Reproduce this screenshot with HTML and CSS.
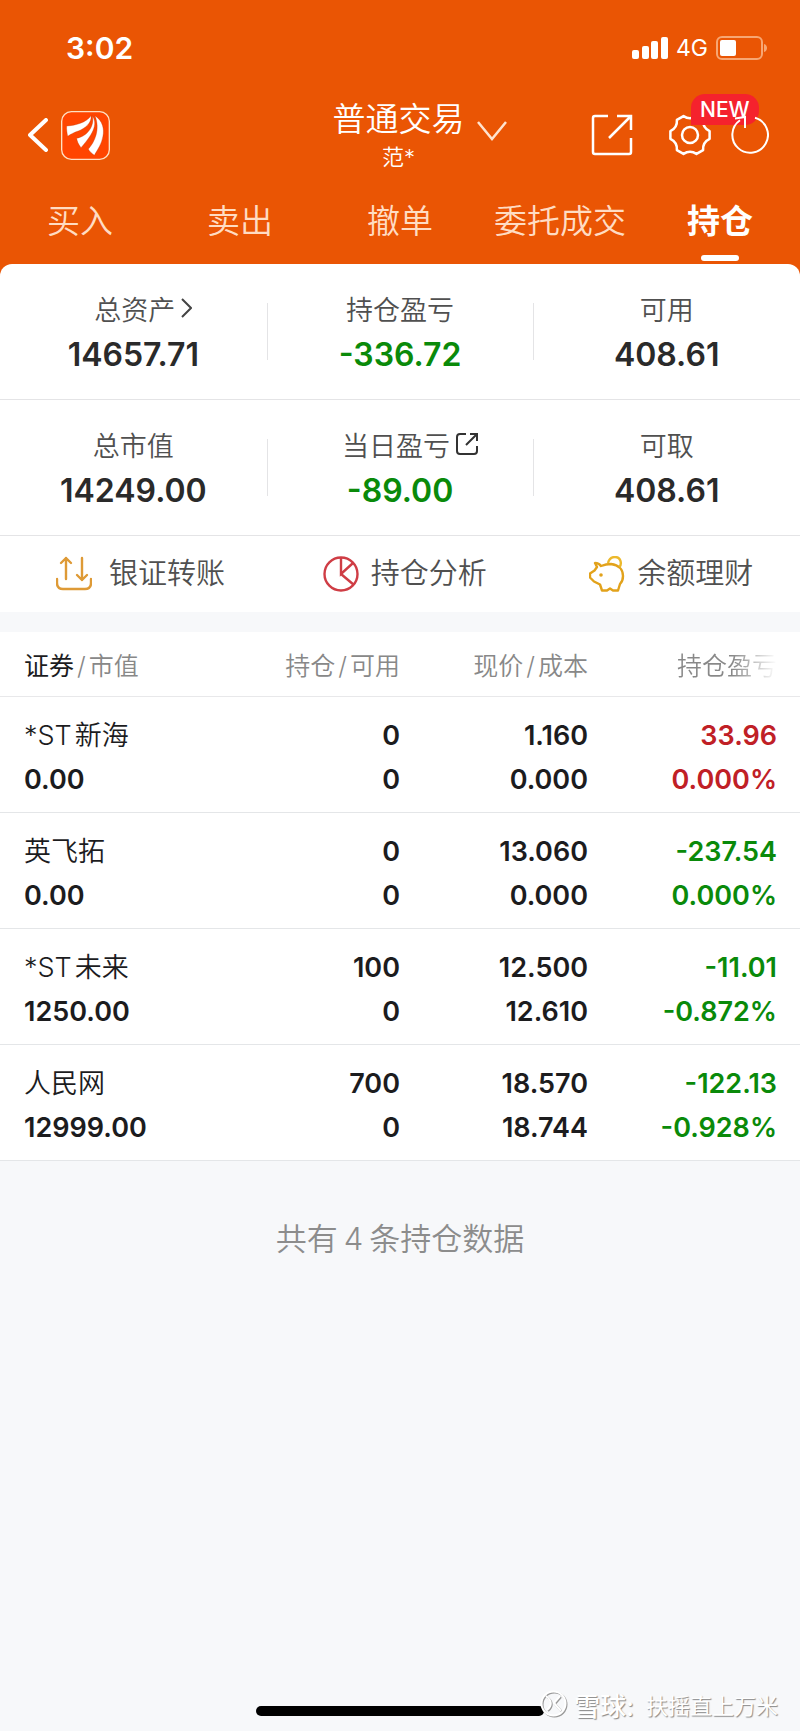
FILE: index.html
```html
<!DOCTYPE html>
<html lang="zh-CN">
<head>
<meta charset="utf-8">
<meta name="viewport" content="width=device-width, initial-scale=1">
<title>普通交易 - 持仓</title>
<link rel="stylesheet" href="styles.css">
</head>
<body>
<header class="top">
  <div class="status">
    <span class="clock">3:02</span>
    <div class="signal">
      <svg width="36" height="24" viewBox="0 0 36 24" fill="#fff" aria-hidden="true"><rect x="0" y="14" width="7" height="9" rx="2"/><rect x="10" y="10" width="7" height="13" rx="2"/><rect x="19" y="5" width="7" height="18" rx="2"/><rect x="29" y="1" width="7" height="22" rx="2"/></svg>
      <span>4G</span>
      <svg width="52" height="24" viewBox="0 0 52 24" aria-hidden="true"><rect x="1" y="1" width="45" height="22" rx="5" fill="none" stroke="#f7a673" stroke-width="2"/><rect x="4" y="4" width="16" height="16" rx="2" fill="#fff"/><path d="M48 8c4 1 4 7 0 8z" fill="#f7a673"/></svg>
    </div>
  </div>
  <div class="bar">
    <div class="bar-left">
      <button type="button" class="icon-btn" aria-label="返回"><svg width="20" height="34" viewBox="0 0 20 34" fill="none" stroke="#fff" stroke-width="4" stroke-linecap="round" stroke-linejoin="round"><path d="M18 2 2 17l16 15"/></svg></button>
      <button type="button" class="icon-btn" aria-label="首页"><svg width="49" height="49" viewBox="0 0 147 147"><rect x="2" y="2" width="143" height="143" rx="29" fill="#ff4500" stroke="#ffe0c4" stroke-width="4"/><g fill="#fff" stroke="#b93400" stroke-width="1"><path d="M17 45C45 43 75 35 90 14 93 36 72 52 52 60 40 64 28 70 20 76 18 65 16 55 17 45z"/><path d="M94 14C108 36 104 60 60 110 52 100 48 90 47 82 78 76 102 46 94 14z"/><path d="M102 14C126 30 130 55 126 75 122 100 110 115 100 133 92 126 85 122 82 114 102 92 118 54 102 14z"/></g></svg></button>
    </div>
    <button type="button" class="title">
      <span class="title-text"><span class="title-main">普通交易</span><span class="title-sub">范*</span></span>
      <svg width="30" height="21" viewBox="0 0 30 21" fill="none" stroke="#ffe3cf" stroke-width="2.5" aria-hidden="true"><path d="M1 1 15 18 29 1"/></svg>
    </button>
    <div class="bar-right">
      <button type="button" class="icon-btn share" aria-label="分享"><svg width="42" height="42" viewBox="0 0 42 42" fill="none" stroke="#fff" stroke-width="2.5"><path d="M17 2H4Q2 2 2 4v34q0 2 2 2h34q2 0 2-2V24M26 2h14v14M40 2 18 24"/></svg></button>
      <button type="button" class="icon-btn settings" aria-label="设置"><svg width="42" height="42" viewBox="-21 -21 42 42" fill="none" stroke="#fff" stroke-width="2.5" stroke-linejoin="round"><path d="M19.6-3.8V3.8Q12.500 7.200 13.100 15.100L6.500 18.900Q0 14.400-6.500 18.900L-13.100 15.100Q-12.500 7.200-19.600 3.800V-3.800Q-12.500-7.200-13.100-15.100L-6.500-18.900Q0-14.400 6.500-18.900L13.100-15.100Q12.500-7.200 19.600-3.800z"/><circle r="8"/></svg><span class="badge">NEW</span></button>
      <button type="button" class="icon-btn refresh" aria-label="刷新"><svg width="38" height="42" viewBox="-19 -21 38 42" fill="none" stroke="#fff" stroke-width="2"><path d="M5-17.200A17.800 17.800 0 1 1-10-14.700M-15-16.500-5-18V-7"/></svg></button>
    </div>
  </div>
  <nav class="tabs">
    <a href="#">买入</a><a href="#">卖出</a><a href="#">撤单</a><a href="#">委托成交</a><a href="#" class="active" aria-current="page">持仓</a>
  </nav>
</header>
<main>
  <section class="sheet">
    <div class="stats">
      <div class="stat more"><span class="label">总资产<svg width="11" height="20" viewBox="0 0 11 20" fill="none" stroke="#444" stroke-width="2" aria-hidden="true"><path d="M1 1 10 10 1 19"/></svg></span><strong>14657.71</strong></div>
      <div class="stat"><span class="label">持仓盈亏</span><strong class="down">-336.72</strong></div>
      <div class="stat"><span class="label">可用</span><strong>408.61</strong></div>
    </div>
    <div class="stats">
      <div class="stat"><span class="label">总市值</span><strong>14249.00</strong></div>
      <div class="stat more"><span class="label">当日盈亏<svg width="22" height="22" viewBox="0 0 22 22" fill="none" stroke="#333" stroke-width="2" aria-hidden="true"><path d="M10 1H4Q1 1 1 4v14q0 3 3 3h14q3 0 3-3v-5M14 1h7v7M21 1 10 12"/></svg></span><strong class="down">-89.00</strong></div>
      <div class="stat"><span class="label">可取</span><strong>408.61</strong></div>
    </div>
    <div class="tools">
      <button type="button" class="transfer"><svg width="36" height="36" viewBox="0 0 36 36" fill="none" stroke="#de9a36" stroke-width="2.400" stroke-linecap="round" stroke-linejoin="round" aria-hidden="true"><path d="M10 23V2M5 7l5-5 5 5M26 2v22M21 19l5 5 5-5"/><path d="M1 23v4q0 6 6 6h22q6 0 6-6v-4"/></svg>银证转账</button>
      <button type="button"><svg width="36" height="36" viewBox="0 0 36 36" fill="none" stroke="#cf3d45" stroke-width="2.400" aria-hidden="true"><circle cx="18" cy="18" r="16.500"/><path d="M18 2v16L30 7M18 18l13 11"/></svg>持仓分析</button>
      <button type="button"><svg width="36" height="36" viewBox="0 0 36 36" fill="none" stroke="#e2a21b" stroke-width="2.400" stroke-linejoin="round" aria-hidden="true"><path d="M6 7q4 0 6 3 5-2 10-2c8 1 12 6 12 12 0 4-1 6-3 8l-2 6.500h-5l-3-2-3 2h-5l-2-6-6-3-4-4v-4l4.500-3L8 11z"/><path d="M19 7c1-4 4-6 7-6 6 0 7 7 4.500 10" stroke="#ecb92c"/><circle cx="12" cy="19" r="1.800" fill="#e2a21b" stroke="none"/></svg>余额理财</button>
    </div>
  </section>
  <table class="holdings">
    <colgroup><col class="c-name"><col class="c-qty"><col class="c-price"><col class="c-pl"></colgroup>
    <thead><tr><th scope="col"><b>证券</b><i>/</i>市值</th><th scope="col">持仓<i>/</i>可用</th><th scope="col">现价<i>/</i>成本</th><th scope="col"><span class="fade">持仓盈亏</span></th></tr></thead>
    <tbody>
      <tr><td><span class="name">*ST<span class="gap">新海</span></span><br>0.00</td><td>0<br>0</td><td>1.160<br>0.000</td><td class="up">33.96<br>0.000%</td></tr>
      <tr><td><span class="name">英飞拓</span><br>0.00</td><td>0<br>0</td><td>13.060<br>0.000</td><td class="down">-237.54<br>0.000%</td></tr>
      <tr><td><span class="name">*ST<span class="gap">未来</span></span><br>1250.00</td><td>100<br>0</td><td>12.500<br>12.610</td><td class="down">-11.01<br>-0.872%</td></tr>
      <tr><td><span class="name">人民网</span><br>12999.00</td><td>700<br>0</td><td>18.570<br>18.744</td><td class="down">-122.13<br>-0.928%</td></tr>
    </tbody>
  </table>
  <p class="total">共有<span class="count">4</span>条持仓数据</p>
</main>
<footer class="foot">
  <div class="home"></div>
  <div class="mark">
    <svg width="28" height="28" viewBox="0 0 28 28" fill="none" aria-hidden="true"><g stroke="#999" stroke-width="2"><circle cx="14.500" cy="14.500" r="12"/><path d="M7 7q9 7 1 14M21 7l-6 7 7 8"/></g><g stroke="#fff" stroke-width="2"><circle cx="13.500" cy="13.500" r="12"/><path d="M6 6q9 7 1 14M20 6l-6 7 7 8"/></g></svg>
    <b>雪球:</b><span>扶摇直上万米</span>
  </div>
</footer>
</body>
</html>
```
FILE: styles.css
```css
* { box-sizing: border-box; }
body {
  margin: 0;
  min-height: 100vh;
  display: flex;
  flex-direction: column;
  background: #f7f8fa;
  color: #1c1c1e;
  font-family: Inter, "Noto Sans CJK SC", sans-serif;
  font-weight: 350;
}
main { flex: 1; }
svg { display: block; flex: none; }
button { border: 0; background: none; padding: 0; margin: 0; color: inherit; font: inherit; }
a { color: inherit; text-decoration: none; }

.top { background: #ea5504; color: #fff; padding-bottom: 16px; }
.status { display: flex; justify-content: space-between; align-items: center; height: 96px; padding: 0 32px 0 66px; }
.clock { font-size: 30px; font-weight: 600; }
.signal { display: flex; align-items: center; gap: 8px; font-size: 23px; font-weight: 400; }

.bar { display: grid; grid-template-columns: 1fr auto 1fr; align-items: center; height: 78px; padding: 0 31px 0 28px; }
.bar-left { display: flex; align-items: center; gap: 13px; }
.bar-right { display: flex; align-items: center; justify-content: flex-end; gap: 20px; }
.icon-btn { position: relative; }
.share { margin-right: 16px; }
.badge {
  position: absolute; left: 22px; top: -20px;
  padding: 0 9px; height: 31px; line-height: 31px;
  background: #f5222d; border-radius: 14px 14px 14px 0;
  font-size: 21px; font-weight: 500;
}
.title { display: flex; align-items: center; gap: 12px; padding-left: 42px; }
.title svg { margin-bottom: 7px; }
.title-text { display: flex; flex-direction: column; align-items: center; padding-top: 2px; }
.title-main { font-size: 33px; line-height: 42px; }
.title-sub { font-size: 22px; line-height: 34px; }

.tabs { display: grid; grid-template-columns: repeat(5, 1fr); height: 90px; }
.tabs a { position: relative; height: 90px; text-align: center; font-size: 33px; line-height: 94px; color: #ffdcc3; }
.tabs .active { color: #fff; font-weight: 700; }
.tabs .active::after {
  content: ""; position: absolute; left: 50%; bottom: 3px;
  width: 38px; height: 6px; margin-left: -19px; border-radius: 3px; background: #fff;
}

.sheet { background: #fff; border-radius: 12px 12px 0 0; margin-top: -16px; margin-bottom: 20px; }
.stats { display: grid; grid-template-columns: repeat(3, 1fr); border-bottom: 1px solid #e4e4e6; }
.stat { position: relative; display: flex; flex-direction: column; align-items: center; padding: 26px 0 23px; }
.stat + .stat::before { content: ""; position: absolute; left: 0; top: 39px; height: 57px; border-left: 1px solid #e4e4e6; }
.label { display: flex; align-items: center; gap: 6px; height: 36px; font-size: 27px; color: #505050; }
.stat strong { font-size: 32px; line-height: 42px; margin-top: 8px; font-weight: 600; color: #2a2a2a; }
.more .label { padding-left: 20px; }
.stat .down, .down { color: #0a8a0a; }
.up { color: #c02026; }

.tools { display: grid; grid-template-columns: repeat(3, 1fr); height: 76px; }
.tools button { display: flex; align-items: center; gap: 12px; padding-left: 56px; font-size: 29px; line-height: 40px; color: #505050; }
.tools .transfer { gap: 17px; }

.holdings { width: 100%; table-layout: fixed; border-collapse: collapse; background: #fff; }
.c-name { width: 27%; }
.c-qty { width: 23%; }
.c-price { width: 23.5%; }
.c-pl { width: 26.5%; }
.holdings th { height: 64px; padding: 0; text-align: right; font-size: 25px; font-weight: 350; color: #888; border-bottom: 1px solid #e8e8ea; }
.holdings th b { font-weight: 400; color: #1c1c1e; }
.holdings th i { font-style: normal; padding: 0 3px; }
.holdings td { padding: 17px 0 10px; text-align: right; font-size: 27px; line-height: 44px; font-weight: 600; border-bottom: 1px solid #e4e6e8; }
.holdings th:first-child, .holdings td:first-child { padding-left: 24px; text-align: left; white-space: nowrap; }
.holdings th:last-child, .holdings td:last-child { padding-right: 23px; }
.holdings .name { font-weight: 350; }
.gap { margin-left: 3px; }
.fade { color: transparent; background: linear-gradient(90deg, #888 55%, #fff); background-clip: text; -webkit-background-clip: text; }

.total { margin: 56px 0 0; text-align: center; font-size: 31px; line-height: 44px; color: #8c8c8c; }
.count { margin: 0 6px; }

.foot { position: relative; padding-bottom: 15px; }
.home { width: 36%; height: 10px; margin: 0 auto; border-radius: 5px; background: #000; }
.mark {
  position: absolute; right: 22px; bottom: 11px;
  display: flex; align-items: center; height: 32px;
  color: #fff; text-shadow: 1px 1px 1px #888; font-size: 22px; font-weight: 400;
}
.mark b { font-size: 26px; font-weight: 500; margin: 0 12px 0 6px; }
```
